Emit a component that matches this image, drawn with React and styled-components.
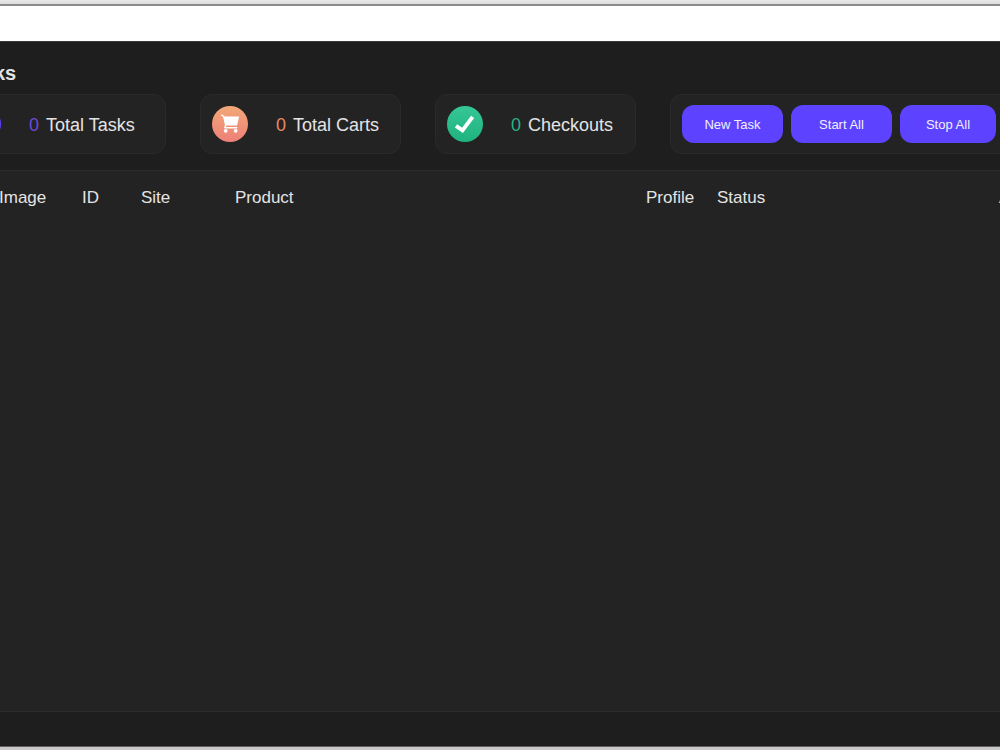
import React from "react";
import styled, { createGlobalStyle } from "styled-components";

const GlobalStyle = createGlobalStyle`
  * { box-sizing: border-box; }
  body {
    margin: 0;
    background: #1e1e1e;
    color: #e4e4e4;
    font-family: "Liberation Sans", Arial, sans-serif;
  }
`;

const Viewport = styled.div`
  display: flex;
  flex-direction: column;
  min-height: 100vh;
  overflow: hidden;
`;

const WindowEdge = styled.div`
  height: 6px;
  background: linear-gradient(#e8e8e8, #dcdcdc);
  border-bottom: 2px solid #8c8c8c;
`;

const TitleBar = styled.div`
  height: 36px;
  background: #fff;
  border-bottom: 1px solid #3a3a3a;
`;

/* The workspace runs past both sides of the visible area. */
const Workspace = styled.main`
  flex: 1;
  display: flex;
  flex-direction: column;
  margin: 0 -135px 0 -47px;
`;

const Heading = styled.h1`
  margin: 0;
  padding: 20px 8px 10px;
  font-size: 20px;
  line-height: 22px;
  font-weight: bold;
`;

const CardRow = styled.section`
  display: flex;
  gap: 34px;
  margin-bottom: 16px;
`;

const Card = styled.div`
  display: flex;
  align-items: center;
  height: 60px;
  width: ${(p) => p.$width};
  flex: ${(p) => (p.$grow ? "1" : "none")};
  gap: ${(p) => p.$gap};
  padding: 0 11px;
  background: #232323;
  border: 1px solid #2a2a2a;
  border-radius: 12px;
`;

const Badge = styled.svg`
  width: 36px;
  height: 36px;
  flex: none;
`;

const Stat = styled.div`
  display: flex;
  gap: 7px;
  padding-top: 2px;
  font-size: 18px;
  line-height: 22px;
  white-space: nowrap;
`;

const Count = styled.span`
  color: ${(p) => p.$color};
`;

const ActionButton = styled.button`
  width: ${(p) => (p.$narrow ? "96px" : "101px")};
  height: 38px;
  padding: 0;
  border: 0;
  border-radius: 12px;
  background: #5d43ff;
  color: #f1efff;
  font-family: inherit;
  font-size: 13px;
  cursor: pointer;
`;

const Panel = styled.section`
  flex: 1;
  background: #232323;
  border-top: 1px solid #2c2c2c;
  border-bottom: 1px solid #2c2c2c;
`;

const TaskTable = styled.table`
  width: 100%;
  table-layout: fixed;
  border-collapse: collapse;
`;

const HeaderCell = styled.th`
  width: ${(p) => p.$width};
  padding: 17px 0 0;
  text-align: left;
  font-size: 17px;
  line-height: 20px;
  font-weight: normal;

  &:first-child { padding-left: 46px; }
`;

const Footer = styled.footer`
  height: 38px;
  background: #1e1e1e;
  border-bottom: 3px solid #cac8c8;
  box-shadow: inset 0 -1px #625f60;
`;

const columns = [
  ["Image", "129px"],
  ["ID", "59px"],
  ["Site", "94px"],
  ["Product", "auto"],
  ["Profile", "71px"],
  ["Status", "282px"],
  ["Actions", "136px"],
];

function TasksBadge() {
  return (
    <Badge viewBox="0 0 36 36" aria-hidden="true">
      <circle cx="18" cy="18" r="18" fill="#5d43ff" />
      <path d="M11 12h14M11 18h14M11 24h14" stroke="#fff" strokeWidth="3" />
    </Badge>
  );
}

function CartBadge() {
  return (
    <Badge viewBox="0 0 36 36" aria-hidden="true">
      <defs>
        <linearGradient id="cart" x1="0" y1="0" x2="0" y2="1">
          <stop offset="0" stopColor="#f2a878" />
          <stop offset="1" stopColor="#ee8078" />
        </linearGradient>
      </defs>
      <circle cx="18" cy="18" r="18" fill="url(#cart)" />
      <path d="M11.3 10.6H27.2L25 19.4H13.4z" fill="#fff" />
      <path
        d="M9.6 9.2l2.2 1.2 1.9 8.6-.9 2.7h12"
        fill="none"
        stroke="#fff"
        strokeWidth="1.4"
        strokeLinecap="round"
        strokeLinejoin="round"
      />
      <circle cx="13.7" cy="24.8" r="1.9" fill="#fff" />
      <circle cx="23.7" cy="24.8" r="1.9" fill="#fff" />
    </Badge>
  );
}

function CheckBadge() {
  return (
    <Badge viewBox="0 0 36 36" aria-hidden="true">
      <defs>
        <linearGradient id="check" x1="0" y1="0" x2="0" y2="1">
          <stop offset="0" stopColor="#35c795" />
          <stop offset="1" stopColor="#1fb380" />
        </linearGradient>
      </defs>
      <circle cx="18" cy="18" r="18" fill="url(#check)" />
      <path d="M9 19.8l6.5 4.6L25.6 10.9" fill="none" stroke="#fff" strokeWidth="3.9" />
    </Badge>
  );
}

function StatCard({ icon, count, color, label, width = "201px" }) {
  return (
    <Card $width={width} $gap="28px">
      {icon}
      <Stat>
        <Count $color={color}>{count}</Count>
        <span>{label}</span>
      </Stat>
    </Card>
  );
}

export default function App() {
  return (
    <Viewport>
      <GlobalStyle />
      <WindowEdge />
      <TitleBar />
      <Workspace>
        <Heading>Tasks</Heading>
        <CardRow>
          <StatCard icon={<TasksBadge />} count={0} color="#6a4bdc" label="Total Tasks" width="213px" />
          <StatCard icon={<CartBadge />} count={0} color="#e88a62" label="Total Carts" />
          <StatCard icon={<CheckBadge />} count={0} color="#2bb285" label="Checkouts" />
          <Card $grow $gap="8px">
            <ActionButton type="button">New Task</ActionButton>
            <ActionButton type="button">Start All</ActionButton>
            <ActionButton type="button" $narrow>Stop All</ActionButton>
          </Card>
        </CardRow>
        <Panel>
          <TaskTable>
            <thead>
              <tr>
                {columns.map(([name, width]) => (
                  <HeaderCell key={name} $width={width} scope="col">{name}</HeaderCell>
                ))}
              </tr>
            </thead>
          </TaskTable>
        </Panel>
        <Footer />
      </Workspace>
    </Viewport>
  );
}
